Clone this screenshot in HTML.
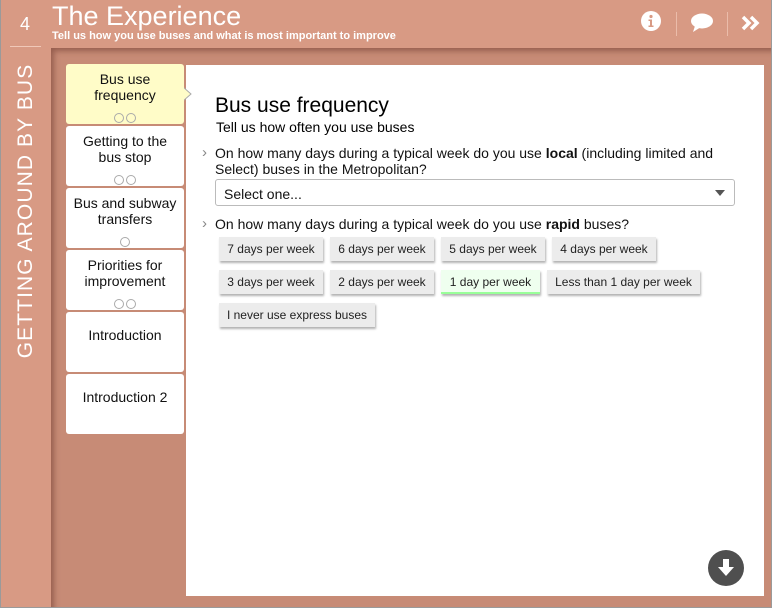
<!DOCTYPE html>
<html><head><meta charset="utf-8"><style>
*{box-sizing:border-box;margin:0;padding:0}
body{width:772px;height:610px;background:#fff;font-family:"Liberation Sans",Arial,sans-serif;position:relative;overflow:hidden}
.frame{position:absolute;left:0;top:0;width:772px;height:608px;background:#d89a84;border-left:1px solid #9a9a9a;border-bottom:1px solid #9a9a9a;border-right:1px solid #9a9a9a}
.num{position:absolute;left:0;width:50px;top:14px;text-align:center;color:#fff;font-size:18px}
.numline{position:absolute;left:10px;top:46px;width:31px;height:1px;background:#f0c8b8}
.vert{position:absolute;left:26px;top:211px;transform:translate(-50%,-50%) rotate(-90deg);white-space:nowrap;color:#fff;font-size:21px;letter-spacing:1.1px}
.title{position:absolute;left:52px;top:1px;color:#fff;font-size:27px}
.sub{position:absolute;left:52px;top:30px;color:#fff;font-size:11px;font-weight:bold}
.inner{position:absolute;left:51px;top:48px;width:720px;height:559px;background:#c78b76;box-shadow:inset 6px 6px 6px -3px rgba(90,40,30,.45)}
.panel{position:absolute;left:186px;top:65px;width:578px;height:531px;background:#fff}
.card{position:absolute;left:66px;width:118px;height:60px;background:#fff;border-radius:3px;text-align:center;font-size:14px;color:#111;line-height:16px;padding-top:7px}
.card.act{background:#fffcc8}
.dots{position:absolute;left:0;right:0;bottom:1px;font-size:0;line-height:0}
.dot{display:inline-block;width:10px;height:10px;border:1px solid #aaa;border-radius:50%;margin:0 1px}
.arrow{position:absolute;left:183px;top:87px;width:9px;height:14px}
h1{position:absolute;left:215px;top:94px;font-weight:normal;font-size:21px;color:#000}
.st{position:absolute;left:216px;top:119px;font-size:14px;color:#000}
.q{position:absolute;left:215px;font-size:14px;color:#111;line-height:16px}
.q::before{content:"›";position:absolute;left:-13px;top:0;color:#888;font-size:15px}
.sel{position:absolute;left:215px;top:179px;width:520px;height:27px;border:1px solid #bbb;border-radius:3px;font-size:14px;padding:6px 8px;color:#111}
.tri{position:absolute;right:9px;top:10px;border-left:5px solid transparent;border-right:5px solid transparent;border-top:6px solid #555}
.btn{position:absolute;height:24px;background:#ececec;font-size:12px;color:#222;line-height:24px;text-align:center;box-shadow:1px 2px 2px rgba(0,0,0,.3)}
.btn.g{background:#efffef;border-bottom:2px solid #9f9}
.icons{position:absolute;top:10px;color:#fff}
.sep{position:absolute;top:12px;width:1px;height:24px;background:#ebbcaa}
.down{position:absolute;left:708px;top:550px;width:36px;height:36px;border-radius:50%;background:#4f4f4f}
</style></head><body>
<div class="frame"></div>
<div class="num">4</div>
<div class="numline"></div>
<div class="vert">GETTING AROUND BY BUS</div>
<div class="title">The Experience</div>
<div class="sub">Tell us how you use buses and what is most important to improve</div>
<svg class="icons" style="left:640px" width="22" height="22" viewBox="0 0 22 22"><circle cx="11" cy="11" r="10" fill="#fff"/><circle cx="11" cy="6.5" r="1.6" fill="#d89a84"/><path d="M8.5 9.5h3.5v6h1.5v1.5h-5v-1.5h1.5v-4.5h-1.5z" fill="#d89a84"/></svg>
<div class="sep" style="left:676px"></div>
<svg class="icons" style="left:690px;top:12px" width="24" height="22" viewBox="0 0 24 22"><ellipse cx="12" cy="9" rx="11" ry="7.5" fill="#fff"/><path d="M5 14 L3 20 L11 15z" fill="#fff"/></svg>
<div class="sep" style="left:727px"></div>
<svg class="icons" style="left:741px;top:14px" width="20" height="18" viewBox="0 0 20 18"><path d="M2 3l6 6-6 6M10 3l6 6-6 6" stroke="#fff" stroke-width="3.5" fill="none"/></svg>
<div class="inner"></div>
<div class="panel"></div>
<div class="card act" style="top:64px">Bus use<br>frequency<div class="dots"><span class="dot"></span><span class="dot"></span></div></div>
<svg class="arrow" viewBox="0 0 9 14"><path d="M0 0L8 7L0 14z" fill="#fffcc8" stroke="#aaa" stroke-width="1"/><rect x="0" y="0" width="1" height="14" fill="#fffcc8"/></svg>
<div class="card" style="top:126px">Getting to the<br>bus stop<div class="dots"><span class="dot"></span><span class="dot"></span></div></div>
<div class="card" style="top:188px">Bus and subway<br>transfers<div class="dots"><span class="dot"></span></div></div>
<div class="card" style="top:250px">Priorities for<br>improvement<div class="dots"><span class="dot"></span><span class="dot"></span></div></div>
<div class="card" style="top:312px;padding-top:15px">Introduction</div>
<div class="card" style="top:374px;padding-top:15px">Introduction 2</div>
<h1>Bus use frequency</h1>
<div class="st">Tell us how often you use buses</div>
<div class="q" style="top:145px">On how many days during a typical week do you use <b>local</b> (including limited and<br>Select) buses in the Metropolitan?</div>
<div class="sel">Select one...<div class="tri"></div></div>
<div class="q" style="top:216px">On how many days during a typical week do you use <b>rapid</b> buses?</div>
<div class="btn" style="left:219px;top:237px;width:104px">7 days per week</div>
<div class="btn" style="left:330px;top:237px;width:104px">6 days per week</div>
<div class="btn" style="left:441px;top:237px;width:104px">5 days per week</div>
<div class="btn" style="left:552px;top:237px;width:104px">4 days per week</div>
<div class="btn" style="left:219px;top:270px;width:104px">3 days per week</div>
<div class="btn" style="left:330px;top:270px;width:104px">2 days per week</div>
<div class="btn g" style="left:441px;top:270px;width:99px">1 day per week</div>
<div class="btn" style="left:547px;top:270px;width:153px">Less than 1 day per week</div>
<div class="btn" style="left:219px;top:303px;width:156px">I never use express buses</div>
<div class="down"><svg width="36" height="36" viewBox="0 0 36 36"><path d="M15 9h6v8h5l-8 9-8-9h5z" fill="#fff"/></svg></div>
</body></html>
